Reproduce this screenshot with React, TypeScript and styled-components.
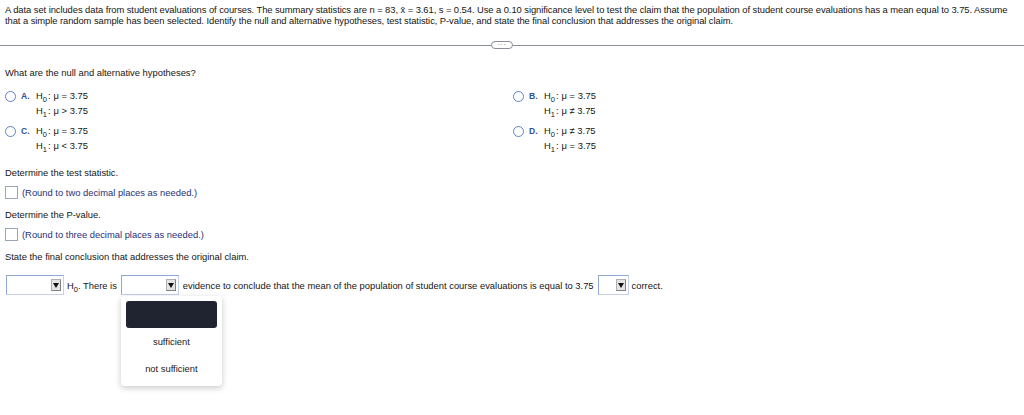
import React from 'react'
import styled, { createGlobalStyle } from 'styled-components'

const GlobalStyle = createGlobalStyle`
  html, body {
    margin: 0;
    padding: 0;
    background: #ffffff;
  }
  body {
    font-family: "Liberation Sans", Arial, sans-serif;
    font-size: 9.4px;
    color: #151515;
  }
`

const Page = styled.div`
  width: 1024px;
  height: 415px;
  overflow: hidden;
  position: relative;
`

const Intro = styled.div`
  padding: 4px 3px 0 5px;
  line-height: 11px;
  letter-spacing: -0.06px;
`

const Divider = styled.div`
  display: flex;
  align-items: center;
  margin-top: 15px;
  height: 8px;
`

const Line = styled.div<{ $w?: number }>`
  flex: ${p => (p.$w ? `0 0 ${p.$w}px` : '1')};
  height: 1px;
  background: #8a8f99;
`

const Pill = styled.div`
  width: 20px;
  height: 6px;
  border: 1px solid #8a8f99;
  border-radius: 4px;
  display: flex;
  align-items: center;
  justify-content: center;
  font-size: 7px;
  line-height: 4px;
  color: #555;
  letter-spacing: 0.5px;
`

const Section = styled.div`
  padding: 0 5px;
`

const Prompt = styled.div<{ $top: number }>`
  margin-top: ${p => p.$top}px;
  line-height: 13px;
`

const Options = styled.div`
  display: grid;
  grid-template-columns: 508px 1fr;
  row-gap: 8px;
  margin-top: 11px;
`

const Option = styled.div`
  display: flex;
  align-items: flex-start;
`

const Radio = styled.span`
  width: 9px;
  height: 9px;
  border: 1px solid #5a84cc;
  border-radius: 50%;
  margin-top: 1px;
  flex-shrink: 0;
`

const Letter = styled.span`
  color: #2e4f9a;
  font-weight: bold;
  font-size: 8.5px;
  margin-left: 5px;
  width: 15px;
  line-height: 12px;
`

const Hyps = styled.div`
  display: flex;
  flex-direction: column;
  row-gap: 3px;
`

const Hyp = styled.div`
  line-height: 12px;
  white-space: nowrap;
`

const Sub = styled.sub`
  font-size: 7.5px;
  vertical-align: -3px;
  line-height: 0;
`

const Colon = styled.span`
  margin: 0 3px 0 1px;
`

const AnswerRow = styled.div`
  display: flex;
  align-items: center;
  margin-top: 7px;
  height: 13px;
`

const AnswerBox = styled.span`
  width: 11px;
  height: 11px;
  border: 1px solid #9aa7bb;
  box-sizing: content-box;
`

const Hint = styled.span`
  color: #1f2f7a;
  margin-left: 4px;
`

const SelectRow = styled.div`
  display: flex;
  align-items: center;
  margin-top: 12px;
  padding-left: 1px;
  white-space: nowrap;
`

const Select = styled.div<{ $w: number }>`
  position: relative;
  width: ${p => p.$w}px;
  height: 20px;
  box-sizing: border-box;
  border: 1px solid #c3d1ea;
  border-top-color: #8fa8d8;
  border-left-color: #8fa8d8;
  background: #fff;
  display: flex;
  justify-content: flex-end;
  align-items: center;
  padding-right: 2px;
`

const Arrow = styled.span`
  width: 10px;
  height: 12px;
  background: #e4e4e4;
  border: 1px solid #b0b0b0;
  border-right-color: #808080;
  border-bottom-color: #808080;
  box-sizing: border-box;
  display: flex;
  align-items: center;
  justify-content: center;
  &::after {
    content: '';
    border-left: 3px solid transparent;
    border-right: 3px solid transparent;
    border-top: 5px solid #111;
  }
`

const Words = styled.span<{ $l: number; $r: number }>`
  margin: 0 ${p => p.$r}px 0 ${p => p.$l}px;
`

const Menu = styled.div`
  position: absolute;
  left: -1px;
  top: 20px;
  width: 101px;
  box-sizing: border-box;
  background: #fff;
  border-radius: 4px;
  box-shadow: 0 2px 6px rgba(0, 0, 0, 0.22);
  padding: 5px 5px 4px 5px;
  z-index: 2;
`

const MenuBlank = styled.div`
  height: 27px;
  background: #1f2430;
  border-radius: 3px;
`

const MenuItem = styled.div`
  text-align: center;
  height: 27px;
  line-height: 27px;
  color: #1a1a1a;
`

type HypData = { op0: string; op1: string }

const options: { key: string; h: HypData }[] = [
  { key: 'A.', h: { op0: '=', op1: '>' } },
  { key: 'B.', h: { op0: '=', op1: '≠' } },
  { key: 'C.', h: { op0: '=', op1: '<' } },
  { key: 'D.', h: { op0: '≠', op1: '=' } },
]

const Hypothesis = ({ n, op }: { n: string; op: string }) => (
  <Hyp>
    H<Sub>{n}</Sub>
    <Colon>:</Colon>μ {op} 3.75
  </Hyp>
)

const App = () => {
  return (
    <Page>
      <GlobalStyle />
      <Intro>
        A data set includes data from student evaluations of courses. The summary statistics are n = 83, x̄ = 3.61, s = 0.54. Use a 0.10 significance level to test the claim that the population of student course evaluations has a mean equal to 3.75. Assume that a simple random sample has been selected. Identify the null and alternative hypotheses, test statistic, P-value, and state the final conclusion that addresses the original claim.
      </Intro>
      <Divider>
        <Line $w={491} />
        <Pill>···</Pill>
        <Line />
      </Divider>
      <Section>
        <Prompt $top={17}>What are the null and alternative hypotheses?</Prompt>
        <Options>
          {options.map(o => (
            <Option key={o.key}>
              <Radio />
              <Letter>{o.key}</Letter>
              <Hyps>
                <Hypothesis n="0" op={o.h.op0} />
                <Hypothesis n="1" op={o.h.op1} />
              </Hyps>
            </Option>
          ))}
        </Options>
        <Prompt $top={14}>Determine the test statistic.</Prompt>
        <AnswerRow>
          <AnswerBox />
          <Hint>(Round to two decimal places as needed.)</Hint>
        </AnswerRow>
        <Prompt $top={9}>Determine the P-value.</Prompt>
        <AnswerRow>
          <AnswerBox />
          <Hint>(Round to three decimal places as needed.)</Hint>
        </AnswerRow>
        <Prompt $top={9}>State the final conclusion that addresses the original claim.</Prompt>
        <SelectRow>
          <Select $w={58}>
            <Arrow />
          </Select>
          <Words $l={3} $r={4}>
            H<Sub>0</Sub>. There is
          </Words>
          <Select $w={58}>
            <Arrow />
            <Menu>
              <MenuBlank />
              <MenuItem>sufficient</MenuItem>
              <MenuItem>not sufficient</MenuItem>
            </Menu>
          </Select>
          <Words $l={4} $r={4}>
            evidence to conclude that the mean of the population of student course evaluations is equal to 3.75
          </Words>
          <Select $w={31}>
            <Arrow />
          </Select>
          <Words $l={3} $r={0}>correct.</Words>
        </SelectRow>
      </Section>
    </Page>
  )
}

export default App
